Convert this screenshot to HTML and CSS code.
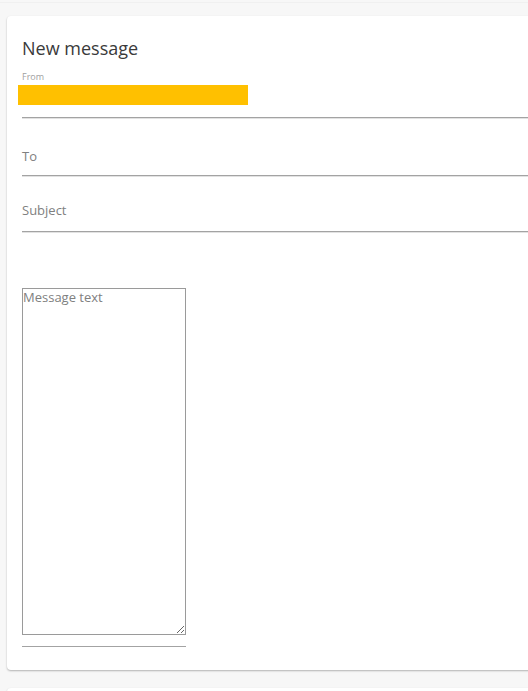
FILE: index.html
```html
<!DOCTYPE html>
<html>
<head>
<meta charset="utf-8">
<link rel="stylesheet" href="styles.css">
</head>
<body>
<div class="page">
  <div class="card">
    <h1 class="title">New message</h1>
    <div class="field field-from">
      <div class="small-label">From</div>
      <div class="redacted"></div>
    </div>
    <div class="field field-to">
      <span class="placeholder">To</span>
    </div>
    <div class="field field-subject">
      <span class="placeholder">Subject</span>
    </div>
    <div class="message">
      <textarea class="message-text" placeholder="Message text"></textarea>
    </div>
  </div>
  <div class="card card-next"></div>
</div>
</body>
</html>
```
FILE: styles.css
```css
html, body {
  margin: 0;
  padding: 0;
  overflow: hidden;
  background: #f7f7f7;
}
body {
  font-family: "Open Sans", Lato, sans-serif;
  width: 528px;
  height: 691px;
}
.page {
  border-top: 1px solid #f0f0f0;
  margin-top: 2px;
  padding: 13px 0 0 7px;
  height: 689px;
  box-sizing: border-box;
  overflow: hidden;
}
.card {
  background: #fff;
  margin-right: -60px;
  border-radius: 4px;
  box-shadow: 0 1px 2px rgba(0,0,0,0.28);
  padding: 19px 0 23px 15px;
  box-sizing: border-box;
}
.card-next {
  margin-top: 18px;
  height: 40px;
  padding: 0;
}
.title {
  margin: 0;
  font-size: 18px;
  font-weight: 400;
  line-height: 26px;
  color: #3a3a3a;
}
.field {
  border-bottom: 1px solid #a3a3a3;
  box-shadow: 0 1px 0 #e2e2e2;
}
.field-from {
  padding-top: 10px;
  padding-bottom: 12px;
}
.small-label {
  font-size: 9px;
  line-height: 12px;
  color: #a0a0a0;
}
.redacted {
  margin: 2px 0 0 -4px;
  width: 230px;
  height: 20px;
  background: #ffc000;
}
.placeholder {
  display: block;
  font-size: 13px;
  line-height: 18px;
  color: #808080;
}
.field-to {
  padding-top: 29px;
  padding-bottom: 10px;
}
.field-subject {
  padding-top: 25px;
  padding-bottom: 12px;
}
.message {
  margin-top: 56px;
  width: 164px;
  padding-bottom: 11px;
  border-bottom: 1px solid #a3a3a3;
}
.message-text {
  display: block;
  width: 164px;
  height: 347px;
  box-sizing: border-box;
  margin: 0;
  padding: 0;
  border: 1px solid #9a9a9a;
  font-family: "Open Sans", Lato, sans-serif;
  font-size: 13px;
  line-height: 16px;
  color: #333;
  background: #fff;
}
.message-text::placeholder {
  color: #808080;
  opacity: 1;
}
```
